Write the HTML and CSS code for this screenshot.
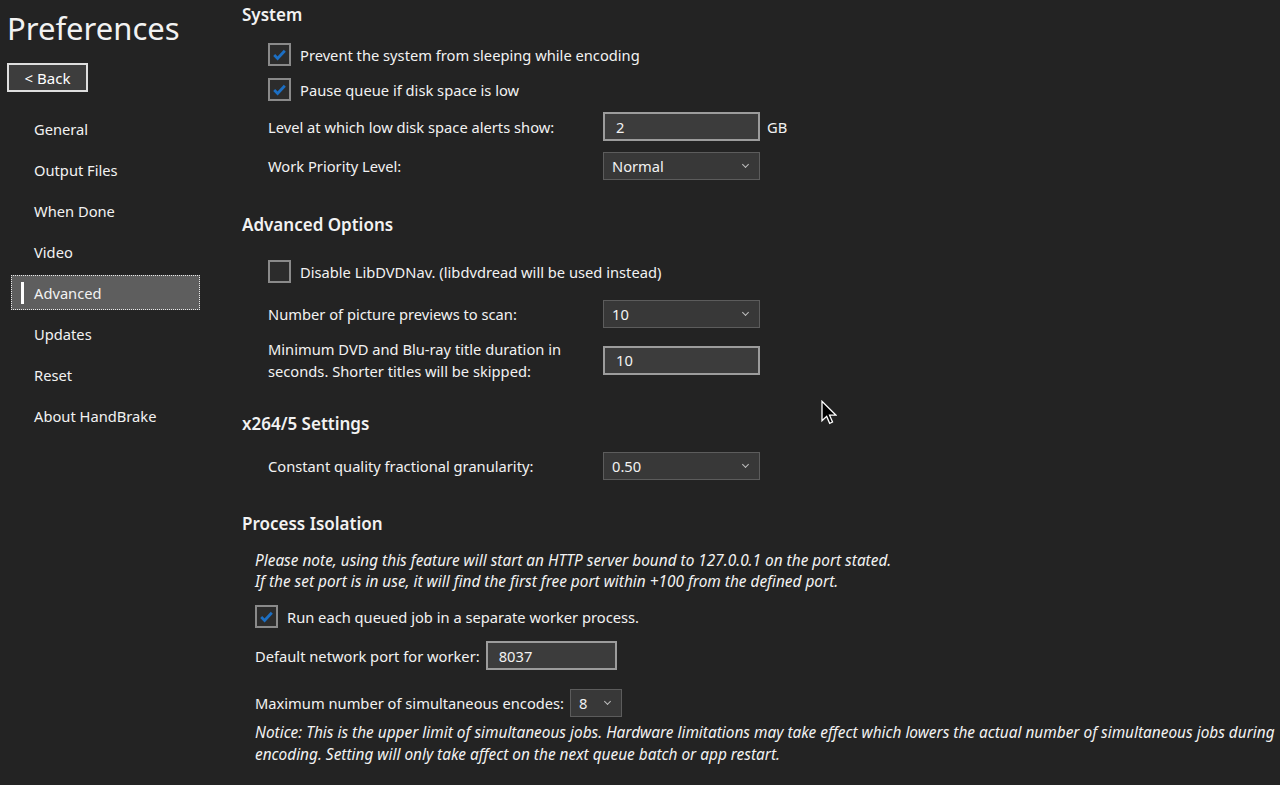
FILE: index.html
```html
<!DOCTYPE html>
<html lang="en">
<head>
    <meta charset="UTF-8">
    <title>Preferences</title>
    <link rel="stylesheet" href="styles.css">
</head>
<body>
    <div class="sidebar">
        <div class="page-title">Preferences</div>
        <a class="back-button">&lt; Back</a>
        <ul class="nav">
            <li>General</li>
            <li>Output Files</li>
            <li>When Done</li>
            <li>Video</li>
            <li class="selected"><span class="marker"></span>Advanced</li>
            <li>Updates</li>
            <li>Reset</li>
            <li>About HandBrake</li>
        </ul>
    </div>

    <div class="content">
        <div class="heading h-system">System</div>
        <div class="check-row r-sleep">
            <span class="checkbox checked"><svg viewBox="0 0 16 16"><path d="M3 8.5l3.2 3.2L13 4.5"/></svg></span>
            Prevent the system from sleeping while encoding
        </div>
        <div class="check-row">
            <span class="checkbox checked"><svg viewBox="0 0 16 16"><path d="M3 8.5l3.2 3.2L13 4.5"/></svg></span>
            Pause queue if disk space is low
        </div>
        <div class="field-row r-level">
            <span class="label">Level at which low disk space alerts show:</span>
            <span class="textbox">2</span>
            <span class="unit">GB</span>
        </div>
        <div class="field-row r-priority">
            <span class="label">Work Priority Level:</span>
            <span class="select">Normal<span class="chevron"></span></span>
        </div>

        <div class="heading h-advanced">Advanced Options</div>
        <div class="check-row r-libdvd">
            <span class="checkbox"></span>
            Disable LibDVDNav. (libdvdread will be used instead)
        </div>
        <div class="field-row r-previews">
            <span class="label">Number of picture previews to scan:</span>
            <span class="select">10<span class="chevron"></span></span>
        </div>
        <div class="field-row r-duration">
            <span class="label">Minimum DVD and Blu-ray title duration in<br>seconds. Shorter titles will be skipped:</span>
            <span class="textbox">10</span>
        </div>

        <div class="heading h-x264">x264/5 Settings</div>
        <div class="field-row r-granularity">
            <span class="label">Constant quality fractional granularity:</span>
            <span class="select">0.50<span class="chevron"></span></span>
        </div>

        <div class="heading h-process">Process Isolation</div>
        <div class="isolation">
            <p class="note">Please note, using this feature will start an HTTP server bound to 127.0.0.1 on the port stated.<br>If the set port is in use, it will find the first free port within +100 from the defined port.</p>
            <div class="check-row r-worker">
                <span class="checkbox checked"><svg viewBox="0 0 16 16"><path d="M3 8.5l3.2 3.2L13 4.5"/></svg></span>
                Run each queued job in a separate worker process.
            </div>
            <div class="inline-row r-port">
                <span>Default network port for worker:</span>
                <span class="textbox port">8037</span>
            </div>
            <div class="inline-row r-max">
                <span>Maximum number of simultaneous encodes:</span>
                <span class="select small">8<span class="chevron"></span></span>
            </div>
            <p class="note notice">Notice: This is the upper limit of simultaneous jobs. Hardware limitations may take effect which lowers the actual number of simultaneous jobs during encoding. Setting will only take affect on the next queue batch or app restart.</p>
        </div>
    </div>

    <svg class="cursor" viewBox="0 0 12 20" width="17" height="26">
        <path d="M1 1v15l3.6-3.4 2.3 5.3 2.2-1-2.3-5.2h5z" fill="#000" stroke="#fff" stroke-width="1"/>
    </svg>
</body>
</html>
```

FILE: styles.css
```css
body {
    margin: 0;
    height: 785px;
    overflow: hidden;
    display: flex;
    background: #232323;
    color: #f2f2f2;
    font-family: "Noto Sans", "Open Sans", sans-serif;
    font-size: 14.7px;
    position: relative;
}

/* left column */
.sidebar {
    width: 242px;
    flex-shrink: 0;
    padding-left: 7px;
    box-sizing: border-box;
}

.page-title {
    font-size: 31px;
    line-height: 40px;
    margin-top: 8px;
    font-weight: 400;
}

.back-button {
    display: flex;
    justify-content: center;
    align-items: center;
    width: 77px;
    height: 25px;
    margin-top: 15px;
    border: 2px solid #dedede;
    background: #3d3d3d;
    color: #fff;
    font-size: 15px;
}

.nav {
    list-style: none;
    margin: 19px 0 0 4px;
    padding: 0;
}

.nav li {
    position: relative;
    display: flex;
    align-items: center;
    width: 189px;
    height: 35px;
    margin-bottom: 6px;
    padding-left: 23px;
    box-sizing: border-box;
    font-size: 14.7px;
}

.nav li.selected {
    background: #5e5e5e;
    outline: 1px dotted #e8e8e8;
    outline-offset: -1px;
}

.marker {
    position: absolute;
    left: 10px;
    top: 7px;
    width: 3px;
    height: 22px;
    background: #fff;
}

/* right column */
.content {
    flex: 1;
}

.heading {
    font-size: 17px;
    font-weight: 600;
    line-height: 22px;
}

.h-system { margin-top: 4px; }
.h-advanced { margin-top: 34px; }
.h-x264 { margin-top: 31px; }
.h-process { margin-top: 33px; }

.check-row {
    display: flex;
    align-items: center;
    gap: 9px;
    height: 35px;
    padding-left: 26px;
}

.r-sleep { margin-top: 11px; }
.r-libdvd { margin-top: 18px; }

.checkbox {
    width: 19px;
    height: 19px;
    border: 2px solid #8a8a8a;
    background: #2c2c2c;
    display: flex;
    align-items: center;
    justify-content: center;
}

.checkbox svg {
    width: 17px;
    height: 17px;
    fill: none;
    stroke: #1c6fc4;
    stroke-width: 2.6;
}

.field-row {
    display: grid;
    grid-template-columns: 335px 157px auto;
    align-items: center;
    padding-left: 26px;
}

.label { line-height: 22px; }

.r-level { margin-top: 5px; height: 29px; }
.r-priority { margin-top: 10px; height: 29px; }
.r-previews { margin-top: 11px; height: 28px; }
.r-duration { margin-top: 10px; height: 44px; }
.r-granularity { margin-top: 16px; height: 29px; }

.textbox {
    display: flex;
    align-items: center;
    height: 29px;
    box-sizing: border-box;
    padding-left: 11px;
    border: 2px solid #9c9c9c;
    background: #3c3c3c;
}

.unit { padding-left: 7px; }

.select {
    position: relative;
    display: flex;
    align-items: center;
    height: 28px;
    box-sizing: border-box;
    padding-left: 8px;
    border: 1px solid #5c5c5c;
    background: #383838;
}

.chevron {
    position: absolute;
    right: 11px;
    top: 9px;
    width: 4px;
    height: 4px;
    border-right: 1px solid #bdbdbd;
    border-bottom: 1px solid #bdbdbd;
    transform: rotate(45deg);
}

.isolation {
    padding-left: 13px;
}

.note {
    margin: 15px 0 0;
    font-style: italic;
    font-size: 15.4px;
    line-height: 21px;
}

.notice {
    margin-top: 5px;
    line-height: 22px;
}

.r-worker {
    padding-left: 0;
    margin-top: 7px;
}

.inline-row {
    display: flex;
    align-items: center;
    gap: 6px;
}

.r-port { margin-top: 7px; height: 29px; }
.r-max { margin-top: 19px; height: 28px; }

.port { width: 131px; }

.select.small {
    width: 52px;
}

.cursor {
    position: absolute;
    left: 820px;
    top: 400px;
}
```
